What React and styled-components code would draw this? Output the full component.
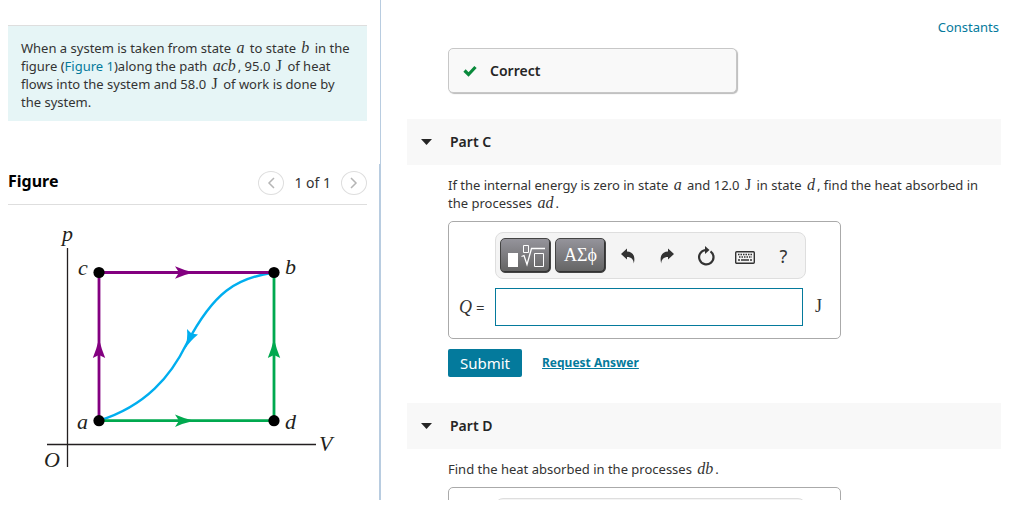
import React from 'react'
import styled, { createGlobalStyle } from 'styled-components'

const GlobalStyle = createGlobalStyle`
  * {
    box-sizing: border-box;
  }
  body {
    margin: 0;
    background: #fff;
    color: #333;
    font-family: 'Noto Sans', 'Open Sans', sans-serif;
    font-size: 13px;
    line-height: 18px;
  }
  p,
  h1,
  h2 {
    margin: 0;
  }
`

const Page = styled.div`
  display: grid;
  grid-template-columns: 381fr 643fr;
  height: calc(100vh - 20px);
  overflow: hidden;
`

const Sidebar = styled.aside`
  display: flex;
  flex-direction: column;
`

const PromptPane = styled.div`
  padding: 25px 13px 43px 8px;
  border-right: 1px solid #b8cce0;
`

const Prompt = styled.p`
  padding: 13px 12px 10px 13px;
  border-top: 1px solid #dedede;
  background: #e6f5f6;
`

const Link = styled.a`
  color: #047a9c;
  text-decoration: ${props => (props.$underline ? 'underline' : 'none')};
  font-weight: ${props => (props.$bold ? 700 : 400)};
  font-size: ${props => (props.$bold ? '12px' : '13px')};
`

const MathText = styled.span`
  margin: 0 ${props => (props.$large ? '0' : '2px')};
  font-family: 'Liberation Serif', serif;
  font-size: ${props => (props.$large ? '18px' : '16px')};
  line-height: 16px;
  font-style: ${props => (props.$upright ? 'normal' : 'italic')};
`

const FigurePane = styled.div`
  flex: 1;
  padding: 0 12px 0 8px;
  border-right: 2px solid #b8cce0;
`

const FigureHeader = styled.div`
  display: flex;
  align-items: center;
  justify-content: space-between;
  height: 41px;
  padding-bottom: 2px;
  border-bottom: 1px solid #dedede;
`

const FigureTitle = styled.h2`
  color: #000;
  font-size: 16px;
  line-height: 20px;
  padding-bottom: 4px;
`

const Pager = styled.div`
  display: flex;
  align-items: center;
  gap: 10px;
  font-size: 14px;
`

const PagerButton = styled.button`
  display: flex;
  align-items: center;
  justify-content: center;
  width: 26px;
  height: 24px;
  padding: 0;
  border: 1px solid #dedede;
  border-radius: 50%;
  background: #fff;
`

const Diagram = styled.svg`
  display: block;
  width: 304px;
  max-width: 100%;
  margin: 15px 0 0 28px;
  font-family: 'Liberation Serif', serif;
  font-size: 22px;
  font-style: italic;
`

const Main = styled.main`
  min-width: 0;
  padding: 18px 23px 0 26px;
`

const TopBar = styled.div`
  display: flex;
  justify-content: flex-end;
  padding: 0 2px 12px 0;
`

const Feedback = styled.div`
  display: flex;
  align-items: center;
  gap: 13px;
  width: 289px;
  height: 45px;
  margin: 0 0 26px 41px;
  padding: 0 14px;
  border: 1px solid #c7c7c7;
  border-radius: 5px;
  background: #f9f9f9;
  box-shadow: 1px 1px 1px #bbb;
  color: #252525;
  font-size: 14px;
  font-weight: 600;
`

const PartHeader = styled.h2`
  display: flex;
  align-items: center;
  gap: 18px;
  height: 46px;
  padding-left: 14px;
  background: #f8f8f8;
  color: #252525;
  font-size: 14px;
  font-weight: 600;
`

const PartBody = styled.div`
  padding: 11px 0 26px 41px;
`

const AnswerBox = styled.div`
  width: 393px;
  max-width: 100%;
  margin-top: 9px;
  padding: 10px 34px 12px 10px;
  border: 1px solid #aaa;
  border-radius: 5px;
`

const Toolbar = styled.div`
  display: flex;
  align-items: center;
  gap: 4px;
  height: 47px;
  margin: 0 0 9px 36px;
  padding-left: 4px;
  border: 1px solid #dedede;
  border-radius: 8px;
  background: #f4f4f4;
`

const PaletteButton = styled.button`
  display: flex;
  align-items: center;
  justify-content: center;
  width: 51px;
  height: 35px;
  padding: 0;
  border: 1px solid #444;
  border-radius: 5px;
  background: linear-gradient(#95949b, #636363);
  box-shadow: inset -1px -1px 0 #333;
  color: #fff;
  font-family: 'Liberation Serif', serif;
  font-size: 18px;
`

const ToolButton = styled.button`
  display: flex;
  align-items: center;
  justify-content: center;
  width: 35px;
  height: 34px;
  padding: 0;
  border: 0;
  background: none;
  color: #333;
  font-family: inherit;
  font-size: 18px;
`

const AnswerRow = styled.div`
  display: flex;
  align-items: center;
`

const AnswerLabel = styled.label`
  flex: 0 0 36px;
  font-size: 15px;
  white-space: nowrap;
`

const AnswerInput = styled.input`
  flex: 1;
  min-width: 0;
  height: 38px;
  margin-right: 3px;
  border: 1px solid #047a9c;
  background: #fff;
`

const Unit = styled.span`
  width: 0;
  text-indent: 9px;
`

const Actions = styled.div`
  display: flex;
  align-items: center;
  gap: 20px;
  margin-top: 10px;
`

const SubmitButton = styled.button`
  width: 74px;
  height: 28px;
  padding: 0;
  border: 0;
  border-radius: 2px;
  background: #047a9c;
  color: #fff;
  font-family: inherit;
  font-size: 15px;
`

const Caret = () => (
  <svg width="11" height="6" viewBox="0 0 11 6" aria-hidden="true">
    <path d="M0 0h11L5.5 6z" fill="#252525" />
  </svg>
)

const Chevron = ({ d }) => (
  <svg width="8" height="12" viewBox="0 0 8 12" aria-hidden="true">
    <path d={d} fill="none" stroke="#b5b5b5" strokeWidth="1.5" />
  </svg>
)

const Figure = () => (
  <Diagram viewBox="36 220 304 256" role="img" aria-label="pV diagram">
    <g stroke="#231f20" strokeWidth="1.3">
      <path d="M67.5 248v219M47 444.5h269" />
    </g>
    <g fill="none" strokeWidth="2.8">
      <path d="M274 272.5C236 278 214 292 187 343C171 376 146 406 99 420.7" stroke="#00aeef" strokeWidth="2.4" />
      <path d="M99 420.7V272.5H274" stroke="#830080" />
      <path d="M99 420.7H274V272.5" stroke="#00a94f" />
    </g>
    <g fill="#830080">
      <path d="M194 272.5Q183 270 175 266.3L179 272.5L175 278.7Q183 275 194 272.5z" />
      <path d="M99 339Q96.5 349 92.8 358L99 355L105.2 358Q101.5 349 99 339z" />
    </g>
    <g fill="#00a94f">
      <path d="M194 420.7Q183 418.2 175 414.5L179 420.7L175 426.9Q183 423.2 194 420.7z" />
      <path d="M274 339Q271.5 349 267.8 358L274 355L280.2 358Q276.5 349 274 339z" />
    </g>
    <path d="M185 349Q188 338 187 329L191.5 333.5L198 334.5Q190 341 185 349z" fill="#00aeef" />
    <circle cx="99" cy="272.5" r="5.6" />
    <circle cx="274" cy="272.5" r="5.6" />
    <circle cx="99" cy="420.7" r="5.6" />
    <circle cx="274" cy="420.7" r="5.6" />
    <g fill="#231f20">
      <text x="62" y="241">p</text>
      <text x="78" y="275">c</text>
      <text x="285" y="274">b</text>
      <text x="77" y="429">a</text>
      <text x="285" y="429">d</text>
      <text x="319" y="451">V</text>
      <text x="44" y="467">O</text>
    </g>
  </Diagram>
)

const TemplateIcon = () => (
  <svg width="40" height="24" viewBox="0 0 40 24" fill="none" stroke="#fff" aria-hidden="true">
    <path d="M2 9h10v14H2z" fill="#fff" stroke="none" />
    <path d="M17.5 1.5h5v7h-5z" />
    <path d="M15.5 12.5l2.5-1L21 20.5L25.5 4.5H39" strokeWidth="1.3" />
    <path d="M28.5 9.5h9v13h-9z" />
  </svg>
)

const UndoIcon = ({ flip }) => (
  <svg width="14" height="16" viewBox="0 0 14 16" aria-hidden="true">
    <path
      d="M0 6L6 0.5V3.5C11.5 3.5 14.8 8 12.8 15.5C12.5 11.5 10.5 9 6 9V11.5z"
      fill="#333"
      transform={flip ? 'matrix(-1 0 0 1 14 0)' : undefined}
    />
  </svg>
)

const ResetIcon = () => (
  <svg width="18" height="20" viewBox="0 0 18 20" aria-hidden="true">
    <path d="M13.5 5.3A7.2 7.2 0 1 1 8.5 4" fill="none" stroke="#333" strokeWidth="2.2" />
    <path d="M8 0L12.5 4L8 8z" fill="#333" />
  </svg>
)

const KeyboardIcon = () => (
  <svg width="20" height="16" viewBox="0 0 20 16" fill="none" stroke="#333" aria-hidden="true">
    <rect x="0.7" y="3.7" width="18.6" height="11.6" rx="1" strokeWidth="1.4" />
    <path d="M3 6.500h14M4 9h13" strokeDasharray="1.5 1" strokeWidth="1.5" />
    <path d="M3 12h2M6 12h8M15 12h2" strokeWidth="1.5" />
  </svg>
)

const AnswerForm = ({ id, symbol, unit }) => (
  <AnswerBox>
    <Toolbar>
      <PaletteButton aria-label="Templates">
        <TemplateIcon />
      </PaletteButton>
      <PaletteButton>ΑΣϕ</PaletteButton>
      <ToolButton aria-label="Undo">
        <UndoIcon />
      </ToolButton>
      <ToolButton aria-label="Redo">
        <UndoIcon flip />
      </ToolButton>
      <ToolButton aria-label="Reset">
        <ResetIcon />
      </ToolButton>
      <ToolButton aria-label="Keyboard shortcuts">
        <KeyboardIcon />
      </ToolButton>
      <ToolButton>?</ToolButton>
    </Toolbar>
    <AnswerRow>
      <AnswerLabel htmlFor={id}>
        <MathText $large>{symbol}</MathText> =
      </AnswerLabel>
      <AnswerInput id={id} type="text" />
      <Unit>
        <MathText $large $upright>
          {unit}
        </MathText>
      </Unit>
    </AnswerRow>
  </AnswerBox>
)

const App = () => (
  <>
    <GlobalStyle />
    <Page>
      <Sidebar>
        <PromptPane>
          <Prompt>
            When a system is taken from state <MathText>a</MathText> to state <MathText>b</MathText> in the figure (
            <Link href="#figure">Figure 1</Link>)along the path <MathText>acb</MathText>, 95.0{' '}
            <MathText $upright>J</MathText> of heat flows into the system and 58.0 <MathText $upright>J</MathText> of work
            is done by the system.
          </Prompt>
        </PromptPane>
        <FigurePane id="figure">
          <FigureHeader>
            <FigureTitle>Figure</FigureTitle>
            <Pager>
              <PagerButton aria-label="Previous figure">
                <Chevron d="M7 1L2 6l5 5" />
              </PagerButton>
              1 of 1
              <PagerButton aria-label="Next figure">
                <Chevron d="M1 1l5 5l-5 5" />
              </PagerButton>
            </Pager>
          </FigureHeader>
          <Figure />
        </FigurePane>
      </Sidebar>
      <Main>
        <TopBar>
          <Link href="#constants">Constants</Link>
        </TopBar>
        <Feedback>
          <svg width="14" height="12" viewBox="0 0 14 12" aria-hidden="true">
            <path d="M1.5 5.5L5.5 9.5L12.5 2" fill="none" stroke="#0a8a3c" strokeWidth="3.2" />
          </svg>
          Correct
        </Feedback>
        <PartHeader>
          <Caret />
          Part C
        </PartHeader>
        <PartBody>
          <p>
            If the internal energy is zero in state <MathText>a</MathText> and 12.0 <MathText $upright>J</MathText> in
            state <MathText>d</MathText>, find the heat absorbed in the processes <MathText>ad</MathText>.
          </p>
          <AnswerForm id="answer-c" symbol="Q" unit="J" />
          <Actions>
            <SubmitButton>Submit</SubmitButton>
            <Link href="#answer" $underline $bold>
              Request Answer
            </Link>
          </Actions>
        </PartBody>
        <PartHeader>
          <Caret />
          Part D
        </PartHeader>
        <PartBody>
          <p>
            Find the heat absorbed in the processes <MathText>db</MathText>.
          </p>
          <AnswerBox>
            <Toolbar />
          </AnswerBox>
        </PartBody>
      </Main>
    </Page>
  </>
)

export default App
